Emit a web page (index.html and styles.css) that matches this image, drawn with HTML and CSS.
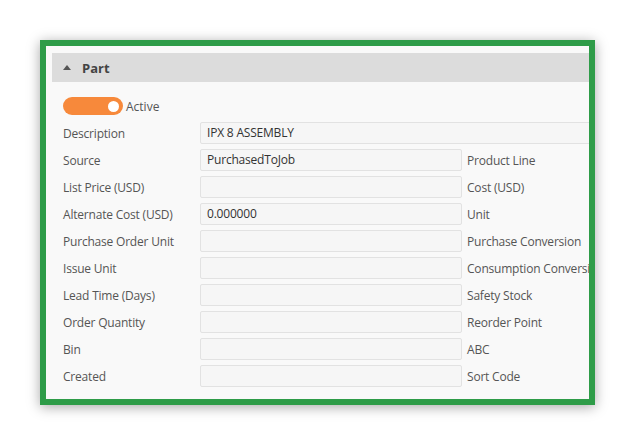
FILE: index.html
```html
<!DOCTYPE html>
<html lang="en">
<head>
  <meta charset="UTF-8">
  <title>Part</title>
  <link rel="stylesheet" href="styles.css">
</head>
<body>

  <div class="frame">
    <div class="panel">
      <div class="panel-header">
        <span class="caret"></span>
        <span class="panel-title">Part</span>
      </div>

      <div class="toggle-row">
        <span class="toggle"><span class="knob"></span></span>
        <span class="toggle-label">Active</span>
      </div>

      <div class="form-row wide">
        <label>Description</label>
        <div class="field">IPX 8 ASSEMBLY</div>
      </div>

      <div class="form-row">
        <label>Source</label>
        <div class="field">PurchasedToJob</div>
        <label class="side">Product Line</label>
      </div>

      <div class="form-row">
        <label>List Price (USD)</label>
        <div class="field"></div>
        <label class="side">Cost (USD)</label>
      </div>

      <div class="form-row">
        <label>Alternate Cost (USD)</label>
        <div class="field">0.000000</div>
        <label class="side">Unit</label>
      </div>

      <div class="form-row">
        <label>Purchase Order Unit</label>
        <div class="field"></div>
        <label class="side">Purchase Conversion</label>
      </div>

      <div class="form-row">
        <label>Issue Unit</label>
        <div class="field"></div>
        <label class="side">Consumption Conversion</label>
      </div>

      <div class="form-row">
        <label>Lead Time (Days)</label>
        <div class="field"></div>
        <label class="side">Safety Stock</label>
      </div>

      <div class="form-row">
        <label>Order Quantity</label>
        <div class="field"></div>
        <label class="side">Reorder Point</label>
      </div>

      <div class="form-row">
        <label>Bin</label>
        <div class="field"></div>
        <label class="side">ABC</label>
      </div>

      <div class="form-row">
        <label>Created</label>
        <div class="field"></div>
        <label class="side">Sort Code</label>
      </div>
    </div>
  </div>

</body>
</html>
```

FILE: styles.css
```css
body {
  font-family: "Open Sans", Arial, sans-serif;
  background-color: #ffffff;
  margin: 0;
  padding: 40px;
}

.frame {
  width: 543px;
  height: 353px;
  border: 6px solid #2e9c48;
  background-color: #f9f9f9;
  box-shadow: 0 2px 12px rgba(0, 0, 0, 0.35);
  overflow: hidden;
}

.panel {
  padding: 7px 0 0 6px;
}

.panel-header {
  display: flex;
  align-items: center;
  height: 29px;
  background-color: #dcdcdc;
  padding-left: 11px;
}

.caret {
  width: 0;
  height: 0;
  border-left: 4px solid transparent;
  border-right: 4px solid transparent;
  border-bottom: 5px solid #555;
  margin-right: 11px;
}

.panel-title {
  font-size: 13px;
  font-weight: 700;
  color: #444;
}

.toggle-row {
  display: flex;
  align-items: center;
  margin: 15px 0 7px 11px;
  height: 18px;
}

.toggle {
  display: flex;
  align-items: center;
  justify-content: flex-end;
  width: 60px;
  height: 18px;
  border-radius: 9px;
  background-color: #f7893b;
  padding-right: 4px;
  box-sizing: border-box;
}

.knob {
  width: 11px;
  height: 11px;
  border-radius: 50%;
  background-color: #ffffff;
}

.toggle-label {
  font-size: 12px;
  color: #555;
  margin-left: 3px;
}

.form-row {
  display: flex;
  align-items: center;
  height: 22px;
  margin-bottom: 5px;
  padding-left: 11px;
  white-space: nowrap;
}

.form-row label {
  flex-shrink: 0;
  width: 137px;
  font-size: 12px;
  letter-spacing: -0.2px;
  color: #555;
}

.form-row .side {
  width: auto;
  margin-left: 5px;
}

.field {
  flex-shrink: 0;
  box-sizing: border-box;
  width: 262px;
  height: 22px;
  border: 1px solid #e2e2e2;
  border-radius: 2px;
  background-color: #f6f6f6;
  font-size: 12px;
  letter-spacing: -0.2px;
  color: #333;
  line-height: 20px;
  padding-left: 6px;
}

.wide .field {
  width: 420px;
}
```
